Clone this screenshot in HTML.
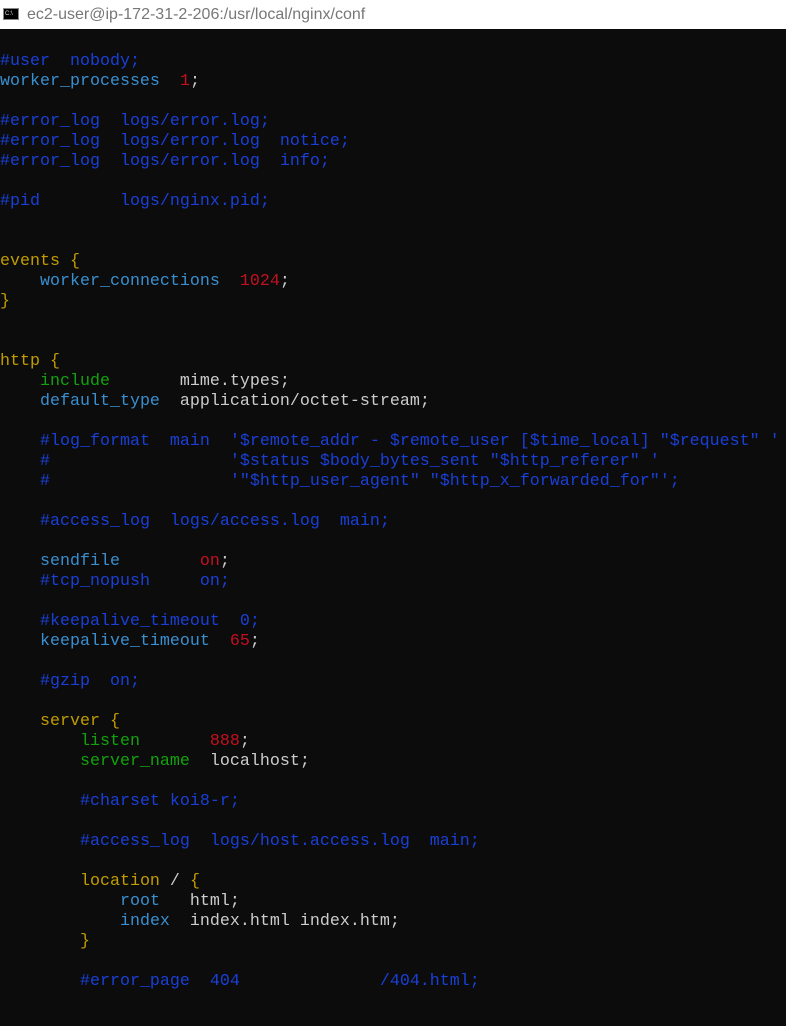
<!DOCTYPE html><html><head><meta charset="utf-8"><style>
body{margin:0;width:786px;height:1026px;background:#0c0c0c;overflow:hidden}
.t{height:29px;background:#fff;position:relative;font-family:"Liberation Sans",sans-serif;font-size:16px;color:#777;line-height:29px}
.t .ic{position:absolute;left:3px;top:8px;width:16px;height:12px;background:#000;border:1px solid #888;box-sizing:border-box}
.t .ic:after{content:"C:\\";position:absolute;left:1px;top:-9px;font-size:6px;color:#ddd}
.t span{position:absolute;left:27px;top:0}
pre{margin:0;position:absolute;top:52px;left:0;font-family:"Liberation Mono",monospace;font-size:16.67px;line-height:20px;color:#cccccc}
.c{color:#1a3fd8}.d{color:#3a8fd0}.n{color:#c50f1f}.g{color:#13a10e}.y{color:#c19c00}
</style></head><body>
<div class="t"><div class="ic"></div><span>ec2-user@ip-172-31-2-206:/usr/local/nginx/conf</span></div>
<pre><span class="c">#user  nobody;</span>
<span class="d">worker_processes</span>  <span class="n">1</span>;

<span class="c">#error_log  logs/error.log;</span>
<span class="c">#error_log  logs/error.log  notice;</span>
<span class="c">#error_log  logs/error.log  info;</span>

<span class="c">#pid        logs/nginx.pid;</span>


<span class="y">events {</span>
    <span class="d">worker_connections</span>  <span class="n">1024</span>;
<span class="y">}</span>


<span class="y">http {</span>
    <span class="g">include</span>       mime.types;
    <span class="d">default_type</span>  application/octet-stream;

    <span class="c">#log_format  main  '$remote_addr - $remote_user [$time_local] "$request" '</span>
    <span class="c">#                  '$status $body_bytes_sent "$http_referer" '</span>
    <span class="c">#                  '"$http_user_agent" "$http_x_forwarded_for"';</span>

    <span class="c">#access_log  logs/access.log  main;</span>

    <span class="d">sendfile</span>        <span class="n">on</span>;
    <span class="c">#tcp_nopush     on;</span>

    <span class="c">#keepalive_timeout  0;</span>
    <span class="d">keepalive_timeout</span>  <span class="n">65</span>;

    <span class="c">#gzip  on;</span>

    <span class="y">server {</span>
        <span class="g">listen</span>       <span class="n">888</span>;
        <span class="g">server_name</span>  localhost;

        <span class="c">#charset koi8-r;</span>

        <span class="c">#access_log  logs/host.access.log  main;</span>

        <span class="y">location</span> / <span class="y">{</span>
            <span class="d">root</span>   html;
            <span class="d">index</span>  index.html index.htm;
        <span class="y">}</span>

        <span class="c">#error_page  404              /404.html;</span>
</pre>
</body></html>
